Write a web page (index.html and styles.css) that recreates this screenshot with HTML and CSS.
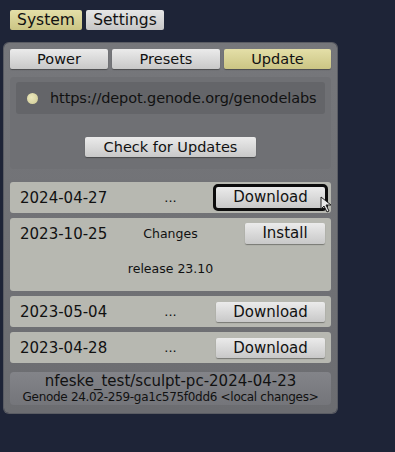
FILE: index.html
```html
<!DOCTYPE html>
<html lang="en">
<head>
    <meta charset="UTF-8">
    <title>Sculpt - Update</title>
    <link rel="stylesheet" href="styles.css">
</head>
<body>
    <div class="topbar">
        <span class="tab tab-system selected">System</span>
        <span class="tab tab-settings">Settings</span>
    </div>

    <div class="panel">
        <div class="subtabs">
            <span class="btn sub-power">Power</span>
            <span class="btn sub-presets">Presets</span>
            <span class="btn sub-update selected">Update</span>
        </div>

        <div class="depot">
            <div class="depot-url">
                <span class="dot"></span>
                <span class="url">https://depot.genode.org/genodelabs</span>
            </div>
            <span class="btn check">Check for Updates</span>
        </div>

        <div class="list">
            <div class="row">
                <span class="date">2024-04-27</span>
                <span class="mid">...</span>
                <span class="btn action focused">Download
                    <svg class="cursor" width="14" height="18" viewBox="0 0 14 18">
                        <path d="M1 1 L1 13 L4 10 L7 16 L9 15 L6 9 L11 9 Z" fill="#e8e8e8" stroke="#222" stroke-width="1"/>
                    </svg>
                </span>
            </div>
            <div class="row row-open">
                <span class="date">2023-10-25</span>
                <span class="mid small">Changes</span>
                <span class="btn action install">Install</span>
                <span class="note small">release 23.10</span>
            </div>
            <div class="row">
                <span class="date">2023-05-04</span>
                <span class="mid">...</span>
                <span class="btn action">Download</span>
            </div>
            <div class="row">
                <span class="date">2023-04-28</span>
                <span class="mid">...</span>
                <span class="btn action">Download</span>
            </div>
        </div>

        <div class="footer">
            <div class="version">nfeske_test/sculpt-pc-2024-04-23</div>
            <div class="build">Genode 24.02-259-ga1c575f0dd6 &lt;local changes&gt;</div>
        </div>
    </div>
</body>
</html>
```

FILE: styles.css
```css
body {
    margin: 0;
    background: #1e2437;
    font-family: "DejaVu Sans", sans-serif;
    color: #111;
    height: 452px;
}

.topbar {
    display: flex;
    gap: 4px;
    padding: 10px 0 0 10px;
}

.tab {
    height: 20px;
    line-height: 20px;
    font-size: 15.5px;
    text-align: center;
    border-radius: 2px;
    background: linear-gradient(#e6e6e6, #c6c6c6);
}

.tab-system {
    width: 72px;
}

.tab-settings {
    width: 78px;
}

.selected {
    background: linear-gradient(#e4dfa8, #cbc584);
}

.panel {
    margin: 13px 0 0 4px;
    width: 327px;
    height: 358px;
    padding: 6px 0 6px 6px;
    border-radius: 5px;
    background: linear-gradient(#76777b, #6c6d71);
    box-shadow: 0 0 0 1px #5a5c63;
}

.btn {
    display: inline-block;
    height: 20px;
    line-height: 20px;
    font-size: 14.5px;
    text-align: center;
    border-radius: 2px;
    background: linear-gradient(#ebebeb, #c8c8c8);
    box-shadow: 0 1px 1px rgba(0, 0, 0, 0.35);
}

.btn.selected {
    background: linear-gradient(#e4dfa8, #cbc584);
}

.subtabs {
    display: flex;
    gap: 4px;
}

.sub-power {
    width: 98px;
}

.sub-presets {
    width: 108px;
}

.sub-update {
    width: 107px;
}

.depot {
    margin-top: 8px;
    width: 321px;
    height: 92px;
    border-radius: 4px;
    background: #6f7074;
    display: flex;
    flex-direction: column;
    align-items: center;
}

.depot-url {
    margin-top: 5px;
    width: 309px;
    height: 32px;
    border-radius: 3px;
    background: #646569;
    display: flex;
    align-items: center;
}

.dot {
    width: 11px;
    height: 11px;
    border-radius: 50%;
    margin: 0 12px 0 11px;
    background: radial-gradient(circle at 40% 40%, #ece8bd, #cfca94);
}

.url {
    font-size: 14.5px;
    color: #111;
    letter-spacing: -0.1px;
}

.check {
    margin-top: 23px;
    width: 171px;
}

.list {
    margin-top: 13px;
    display: flex;
    flex-direction: column;
    gap: 5px;
}

.row {
    width: 321px;
    min-height: 31px;
    border-radius: 3px;
    background: #b7b8b1;
    display: grid;
    grid-template-columns: 1fr auto 1fr;
    align-items: center;
}

.date {
    padding-left: 10px;
    font-size: 15px;
}

.mid {
    font-size: 13px;
}

.small {
    font-size: 12.5px;
}

.action {
    justify-self: end;
    margin-right: 6px;
    width: 109px;
    font-size: 15px;
    position: relative;
}

.focused {
    width: 109px;
    height: 21px;
    line-height: 21px;
    margin-right: 3px;
    border: 3px solid #0c0c0c;
    border-radius: 5px;
    box-shadow: none;
}

.cursor {
    position: absolute;
    right: -9px;
    top: 9px;
}

.row-open {
    height: 73px;
    grid-template-rows: 27px 1fr;
    align-items: start;
}

.row-open .date {
    margin-top: 7px;
}

.row-open .mid {
    margin-top: 8px;
}

.install {
    width: 80px;
    height: 21px;
    margin-top: 5px;
}

.note {
    grid-column: 1 / 4;
    text-align: center;
    margin-top: 16px;
}

.footer {
    margin-top: 9px;
    width: 321px;
    height: 33px;
    border-radius: 4px;
    background: linear-gradient(#838489, #74757a);
    text-align: center;
}

.version {
    font-size: 15px;
    line-height: 17px;
    padding-top: 1px;
}

.build {
    font-size: 12px;
    line-height: 14px;
    letter-spacing: -0.3px;
    white-space: nowrap;
}
```
